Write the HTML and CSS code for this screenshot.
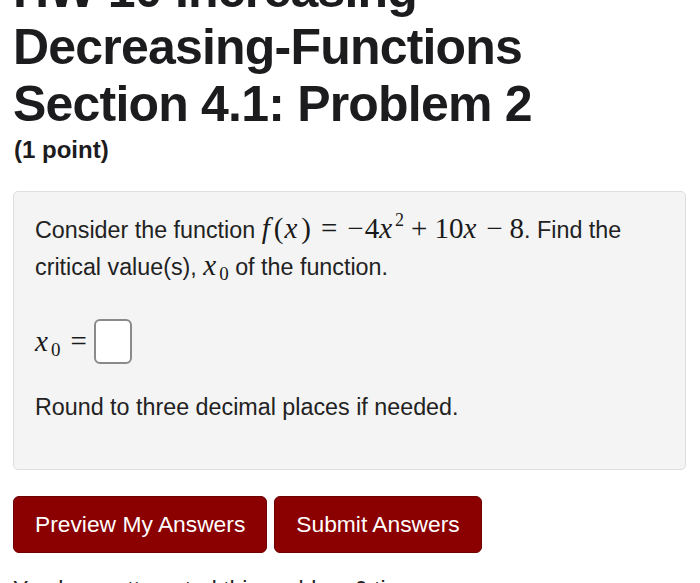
FILE: index.html
```html
<!DOCTYPE html>
<html lang="en">
<head>
<meta charset="utf-8">
<title>HW 10 Increasing Decreasing-Functions</title>
<link rel="stylesheet" href="styles.css">
</head>
<body>
<div class="page">
  <h1 class="title">HW 10 Increasing<br>Decreasing-Functions<br>Section 4.1: Problem 2</h1>
  <div class="points">(1 point)</div>
  <div class="problem">
    <p class="text">Consider the function <span class="math"><i class="mi">f</i><span class="mp">(</span><i class="mi">x</i><span class="mp">)</span><span class="rel">=</span><span class="un">−</span>4<i class="mi">x</i><sup class="sup">2</sup><span class="bin">+</span>10<i class="mi">x</i><span class="bin">−</span>8</span>. Find the critical value(s), <span class="math"><i class="mi">x</i><sub class="sub">0</sub></span> of the function.</p>
    <div class="answer">
      <span class="math"><i class="mi">x</i><sub class="sub">0</sub><span class="rel">=</span></span><span class="input"></span>
    </div>
    <p class="text note">Round to three decimal places if needed.</p>
  </div>
  <div class="buttons">
    <button class="btn">Preview My Answers</button>
    <button class="btn">Submit Answers</button>
  </div>
  <p class="attempts">You have attempted this problem 0 times.</p>
</div>
</body>
</html>
```

FILE: styles.css
```css
* { box-sizing: border-box; }
html, body { margin: 0; padding: 0; background: #ffffff; }
body {
  font-family: "Liberation Sans", Arial, sans-serif;
  color: #222222;
}
.page {
  padding: 0 14px 0 13px;
}
.title {
  margin: -38px 0 0 0;
  font-size: 50px;
  line-height: 57px;
  font-weight: 700;
  letter-spacing: -0.8px;
  color: #1c1c1e;
}
.points {
  margin-top: 2px;
  font-size: 24px;
  line-height: 30px;
  font-weight: 700;
  color: #1c1c1e;
  margin-left: 1px;
}
.problem {
  margin-top: 26px;
  background: #f4f4f4;
  border: 1px solid #dedede;
  border-radius: 5px;
  padding: 19px 20px 44px 21px;
}
.text {
  margin: 0;
  font-size: 23.3px;
  line-height: 35px;
}
.math {
  font-family: "Liberation Serif", "Times New Roman", serif;
  font-size: 29px;
  white-space: nowrap;
  color: #1a1a1a;
}
.mi { font-style: italic; padding-right: 3px; }
.mp { padding: 0 1px; }
.rel { margin: 0 10px 0 9px; }
.bin { margin: 0 7px; }
.un { margin-right: 1px; }
.sup { font-size: 18px; vertical-align: 12px; line-height: 0; }
.sub { font-size: 19px; vertical-align: -5px; line-height: 0; }
.answer {
  margin-top: 34px;
  display: flex;
  align-items: center;
  height: 45px;
}
.answer .math .rel { margin: 0 7px 0 10px; }
.input {
  width: 38px;
  height: 45px;
  background: #ffffff;
  border: 2px solid #8a8a8a;
  border-radius: 6px;
}
.note {
  margin-top: 26px;
}
.buttons {
  margin-top: 26px;
  display: flex;
  gap: 7px;
}
.btn {
  font-family: "Liberation Sans", Arial, sans-serif;
  font-size: 22.8px;
  line-height: 27px;
  color: #ffffff;
  background: #8b0000;
  border: 1px solid #6e0000;
  border-radius: 6px;
  padding: 14px 21px 14px 21px;
  margin: 0;
}
.attempts {
  margin: 22px 0 0 0;
  font-size: 23px;
  line-height: 30px;
}
```
